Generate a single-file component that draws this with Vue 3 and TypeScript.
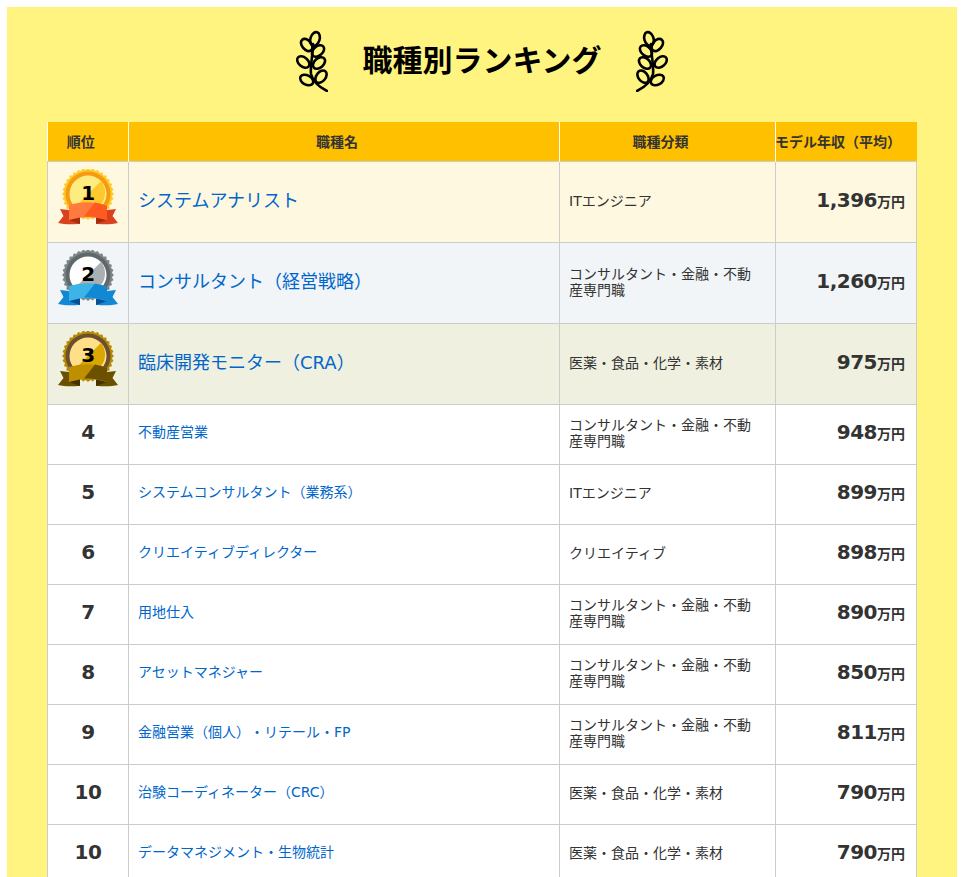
<template>
  <div class="panel">
    <h2 class="title">
      <svg class="wheat" viewBox="0 0 34 62">
        <g fill="none" stroke="#000" stroke-width="2.6" stroke-linecap="round">
          <path d="M33 61C25 57 19 52 17 44C16 34 19 26 19 14" />
          <ellipse v-for="(l, i) in leaves" :key="i" :cx="l[0]" :cy="l[1]" rx="4.600" ry="7" :transform="`rotate(${l[2]} ${l[0]} ${l[1]})`" />
        </g>
      </svg>
      <span>職種別ランキング</span>
      <svg class="wheat flip" viewBox="0 0 34 62">
        <g fill="none" stroke="#000" stroke-width="2.6" stroke-linecap="round">
          <path d="M33 61C25 57 19 52 17 44C16 34 19 26 19 14" />
          <ellipse v-for="(l, i) in leaves" :key="i" :cx="l[0]" :cy="l[1]" rx="4.600" ry="7" :transform="`rotate(${l[2]} ${l[0]} ${l[1]})`" />
        </g>
      </svg>
    </h2>

    <table class="ranking">
      <colgroup>
        <col class="c1" />
        <col class="c2" />
        <col class="c3" />
        <col class="c4" />
      </colgroup>
      <thead>
        <tr>
          <th>順位</th>
          <th>職種名</th>
          <th>職種分類</th>
          <th class="tight">モデル年収（平均）</th>
        </tr>
      </thead>
      <tbody>
        <tr v-for="(row, i) in rows" :key="i" :class="i < 3 ? `top top${i + 1}` : ''">
          <td class="rank">
            <svg v-if="i < 3" class="medal" viewBox="0 0 60 56">
              <polygon :points="teeth" :fill="medals[i].teeth" />
              <circle cx="30" cy="25" r="22.500" :fill="medals[i].ring" />
              <circle cx="30" cy="25" r="18.500" :fill="medals[i].inner" />
              <path d="M43 12A18.500 18.500 0 0 1 17 38Z" :fill="medals[i].shade" />
              <path d="M11 41L2 40L5.500 47L0 54C8 56 16 55 22 55L22 44Z" :fill="medals[i].tail" />
              <path d="M49 41L58 40L54.500 47L60 54C52 56 44 55 38 55L38 44Z" :fill="medals[i].tail" />
              <path d="M11 51L22 47L22 55Z" :fill="medals[i].fold" />
              <path d="M49 51L38 47L38 55Z" :fill="medals[i].fold" />
              <path d="M11 36Q30 30 49 37L49 51Q30 45 11 51Z" :fill="medals[i].band" />
              <path d="M37 33.500Q44 34.500 49 37L49 51Q38 47 26 47.500Z" :fill="medals[i].bandDark" />
              <text x="30" y="31" text-anchor="middle" class="medal-num">{{ row.rank }}</text>
            </svg>
            <template v-else>{{ row.rank }}</template>
          </td>
          <td class="job"><a>{{ row.job }}</a></td>
          <td class="cat">{{ row.cat }}</td>
          <td class="pay"><b>{{ row.pay }}</b><small>万円</small></td>
        </tr>
      </tbody>
    </table>
  </div>
</template>

<script setup lang="ts">
const leaves: [number, number, number][] = [
  [21, 9, 18],
  [12.7, 15, -40],
  [24, 21, 50],
  [9.3, 32, -50],
  [25, 33, 48],
  [12.7, 50, -62],
  [27, 46.7, 38],
]

const medals = [
  { teeth: '#ffc928', ring: '#f59a12', inner: '#ffec80', shade: '#ffc92e', tail: '#d8421c', fold: '#a52c10', band: '#ff7a3c', bandDark: '#ff5a20' },
  { teeth: '#7f8789', ring: '#5f686a', inner: '#ffffff', shade: '#aab0b1', tail: '#1088d4', fold: '#0a4f8f', band: '#3cb4e8', bandDark: '#1088d4' },
  { teeth: '#b88a00', ring: '#6a5030', inner: '#ffdf88', shade: '#dba600', tail: '#6b5000', fold: '#443300', band: '#c08f00', bandDark: '#6b5000' },
]

// serrated edge of the medal
const teeth = Array.from({ length: 64 }, (_, i) => {
  const r = i % 2 ? 24 : 26
  const a = (i / 64) * Math.PI * 2
  return `${(30 + r * Math.cos(a)).toFixed(2)},${(25 + r * Math.sin(a)).toFixed(2)}`
}).join(' ')

const consulting = 'コンサルタント・金融・不動産専門職'
const pharma = '医薬・食品・化学・素材'

const rows = [
  { rank: 1, job: 'システムアナリスト', cat: 'ITエンジニア', pay: '1,396' },
  { rank: 2, job: 'コンサルタント（経営戦略）', cat: consulting, pay: '1,260' },
  { rank: 3, job: '臨床開発モニター（CRA）', cat: pharma, pay: '975' },
  { rank: 4, job: '不動産営業', cat: consulting, pay: '948' },
  { rank: 5, job: 'システムコンサルタント（業務系）', cat: 'ITエンジニア', pay: '899' },
  { rank: 6, job: 'クリエイティブディレクター', cat: 'クリエイティブ', pay: '898' },
  { rank: 7, job: '用地仕入', cat: consulting, pay: '890' },
  { rank: 8, job: 'アセットマネジャー', cat: consulting, pay: '850' },
  { rank: 9, job: '金融営業（個人）・リテール・FP', cat: consulting, pay: '811' },
  { rank: 10, job: '治験コーディネーター（CRC）', cat: pharma, pay: '790' },
  { rank: 10, job: 'データマネジメント・生物統計', cat: pharma, pay: '790' },
]
</script>

<style scoped>
.panel {
  width: 950px;
  margin: 7px;
  padding: 0 40px 40px;
  box-sizing: border-box;
  background: #fff47f;
  font-family: 'DejaVu Sans', 'Noto Sans CJK JP', sans-serif;
  color: #333;
  text-spacing-trim: space-all;
}

.title {
  height: 115px;
  margin: 0;
  display: flex;
  align-items: center;
  justify-content: center;
  gap: 34px;
  padding-bottom: 13px;
  box-sizing: border-box;
  font-family: 'Noto Sans CJK JP', sans-serif;
  font-size: 30px;
  font-weight: 700;
  color: #000;
}

.wheat {
  width: 34px;
  height: 62px;
  margin-top: 6px;
}

.wheat.flip {
  transform: scaleX(-1);
}

.ranking {
  width: 869px;
  table-layout: fixed;
  border-collapse: collapse;
  background: #fff;
}

.c1 {
  width: 81px;
}
.c2 {
  width: 431px;
}
.c3 {
  width: 216px;
}
.c4 {
  width: 141px;
}

th {
  height: 37px;
  padding: 0 14px 2px 0;
  background: #ffc000;
  border-left: 1px solid #fff;
  font-family: 'Noto Sans CJK JP', sans-serif;
  font-size: 14px;
  font-weight: 700;
  color: #333;
  text-align: center;
  white-space: nowrap;
}

th:first-child {
  border-left: 0;
}

th.tight {
  padding-right: 0;
  text-align: left;
  text-indent: -1px;
}

td {
  height: 60px;
  padding: 0 10px 4px 9px;
  border: 1px solid #ccc;
  font-size: 14px;
  line-height: 16px;
  box-sizing: border-box;
}

.top td {
  height: 81px;
  padding-bottom: 2px;
}

.top1 {
  background: #fff8e1;
}
.top2 {
  background: #f1f5f7;
}
.top3 {
  background: #eff0e0;
}

td.rank {
  padding: 0 0 6px;
  text-align: center;
  font-size: 20px;
  font-weight: 700;
  letter-spacing: -0.5px;
}

.top td.rank {
  padding: 0;
}

.medal {
  display: block;
  width: 60px;
  height: 56px;
  margin: -11px auto 0;
}

.medal-num {
  font-family: 'DejaVu Sans', sans-serif;
  font-size: 20px;
  font-weight: 700;
  fill: #000;
}

td.job {
  padding-bottom: 6px;
}

.top td.job {
  padding-bottom: 2px;
}

.job a {
  color: #0066cc;
}

.top .job a {
  font-size: 18px;
}

td.cat {
  padding-right: 20px;
}

td.pay {
  padding-right: 11px;
  text-align: right;
}

.pay b {
  font-size: 20px;
  letter-spacing: -0.5px;
}

.pay small {
  font-size: 14px;
  font-weight: 700;
}
</style>

<style>
html,
body {
  height: 100%;
  overflow: hidden;
}
</style>
